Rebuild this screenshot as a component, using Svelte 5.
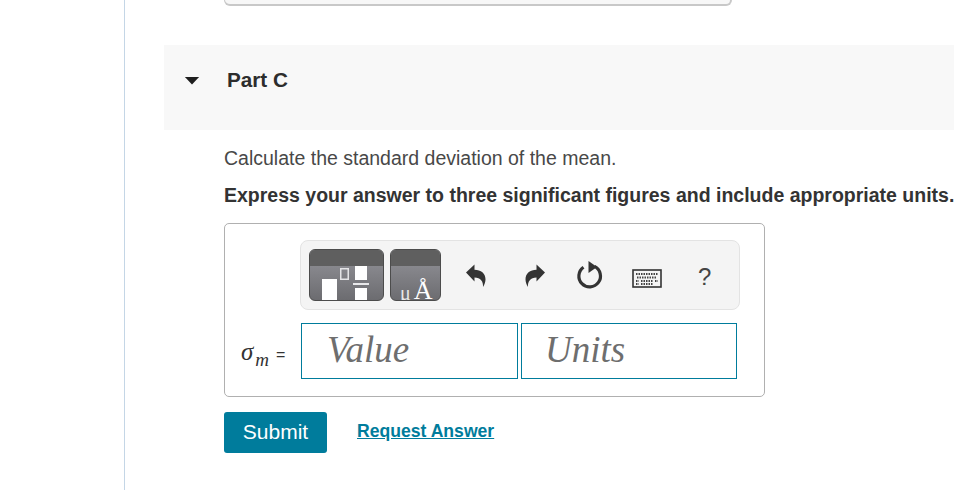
<script>
	const part = 'Part C';
</script>

<div class="page">
	<div class="prev-card"></div>

	<section class="part">
		<header class="part-head">
			<svg class="caret" width="18" height="10" viewBox="0 0 18 10"><path d="M1 1h16l-8 8.500z" fill="#1f1f1f" /></svg>
			<h2>{part}</h2>
		</header>

		<div class="part-body">
			<p class="prompt">Calculate the standard deviation of the mean.</p>
			<p class="instr">Express your answer to three significant figures and include appropriate units.</p>

			<div class="answer">
				<div class="toolbar">
					<div class="tpl wide">
						<div class="tpl-top"></div>
						<svg width="73" height="36" viewBox="0 0 73 36">
							<rect x="12" y="15" width="15" height="21" fill="#fff" />
							<rect x="30.750" y="4.750" width="7.500" height="10.500" fill="none" stroke="#e4e4e6" stroke-width="1.500" />
							<rect x="45" y="1" width="12" height="15" fill="#fff" />
							<rect x="43" y="19" width="16" height="2" fill="#e8e8ea" />
							<rect x="45" y="24" width="12" height="12" fill="#fff" />
						</svg>
					</div>
					<div class="tpl narrow">
						<div class="tpl-top"></div>
						<span class="mu">μ</span><span class="ang">Å</span>
					</div>

					<div class="tools">
						<svg class="undo" width="22" height="24" viewBox="0 0 22 24"><path d="M1 9.500 9.500 1.500v5.300c6.500 0 11 3.700 11 9.500 0 2.800-1 5.500-2.500 7.700.5-5.500-2.500-9.500-8.500-9.500v4z" fill="#333" /></svg>
						<svg class="redo" width="22" height="24" viewBox="0 0 22 24"><path d="M21 9.500 12.500 1.500v5.300c-6.500 0-11 3.700-11 9.500 0 2.800 1 5.500 2.500 7.700-.5-5.500 2.500-9.500 8.500-9.500v4z" fill="#333" /></svg>
						<svg class="reset" width="28" height="30" viewBox="0 0 28 30">
							<path d="M18.500 6.400A10.800 10.800 0 1 1 7.500 7.200" fill="none" stroke="#333" stroke-width="3.200" />
							<path d="M12.500 1l8.500 6-8.500 6z" fill="#333" />
						</svg>
						<svg class="keys" width="30" height="19" viewBox="0 0 30 19">
							<rect x="1" y="1" width="28" height="17" fill="#f4f4f4" stroke="#333" stroke-width="1.600" />
							<path d="M4 5h22M5 8.500h20M4 12h3M9 12h12M23 12h3M4 15h3M9 15h12" stroke="#444" stroke-width="1.800" stroke-dasharray="1.500 1" fill="none" />
						</svg>
						<span class="help">?</span>
					</div>
				</div>

				<div class="row">
					<span class="label"><i>σ<sub>m</sub></i><span class="eq">=</span></span>
					<div class="field value">Value</div>
					<div class="field units">Units</div>
				</div>
			</div>

			<div class="actions">
				<button>Submit</button>
				<a href="#answer">Request Answer</a>
			</div>
		</div>
	</section>
</div>

<style>
	:global(body) {
		margin: 0;
		background: #fff;
	}

	.page {
		box-sizing: border-box;
		height: 490px;
		margin-left: 124px;
		width: 830px;
		border-left: 1px solid #c4d6e6;
		overflow: hidden;
		font-family: "Liberation Sans", Arial, sans-serif;
		color: #333;
	}

	.prev-card {
		box-sizing: border-box;
		width: 508px;
		height: 6px;
		margin-left: 99px;
		background: #f7f7f7;
		border: 1px solid #c8c8c8;
		border-top: 0;
		border-right-width: 2px;
		border-bottom-width: 2px;
		border-radius: 0 0 8px 8px;
	}

	.part {
		margin: 39px 0 0 39px;
	}

	.part-head {
		box-sizing: border-box;
		height: 85px;
		background: #f8f8f8;
		display: flex;
		align-items: center;
		padding: 0 0 15px 20px;
	}

	.caret {
		flex: none;
		width: 16px;
		height: 9px;
	}

	h2 {
		margin: 0 0 0 27px;
		font-size: 20.700px;
		font-weight: bold;
		color: #2d2d2d;
	}

	.part-body {
		padding: 16px 0 0 60px;
	}

	p {
		margin: 0;
		font-size: 19.500px;
		line-height: 24px;
		white-space: nowrap;
	}

	.prompt {
		color: #484848;
	}

	.instr {
		margin-top: 13px;
		font-weight: bold;
	}

	.answer {
		box-sizing: border-box;
		width: 541px;
		height: 174px;
		margin-top: 16px;
		border: 1px solid #b0b0b0;
		border-radius: 5px;
		padding: 16px 24px 0 75px;
	}

	.toolbar {
		box-sizing: border-box;
		width: 440px;
		height: 70px;
		background: #f4f4f4;
		border: 1px solid #e3e3e3;
		border-radius: 8px;
		display: flex;
		align-items: center;
		padding: 0 0 0 8px;
		gap: 6px;
	}

	.tpl {
		position: relative;
		box-sizing: border-box;
		height: 52px;
		background: linear-gradient(#95959b, #6c6c70);
		border: 1px solid #4c4c4c;
		border-radius: 6px;
		overflow: hidden;
		display: flex;
		align-items: flex-end;
		flex: none;
	}

	.wide {
		width: 75px;
	}

	.narrow {
		width: 51px;
		font-family: "Liberation Serif", serif;
		color: #fff;
	}

	.tpl-top {
		position: absolute;
		top: 0;
		left: 0;
		right: 0;
		height: 16px;
		background: #5f5f5f;
	}

	.tpl svg {
		display: block;
	}

	.mu {
		font-size: 20px;
		line-height: 20px;
		margin: 0 0 -3px 9px;
		color: #e8e8e8;
	}

	.ang {
		font-size: 26px;
		line-height: 21px;
		margin: 0 0 -1px 3px;
	}

	.tools {
		display: flex;
		align-items: center;
		margin-left: 18px;
	}

	.tools svg {
		display: block;
		flex: none;
	}

	.redo {
		margin-left: 37px;
	}

	.reset {
		margin-left: 30px;
	}

	.keys {
		margin-left: 28px;
		margin-top: 6px;
	}

	.help {
		margin: 4px 0 0 36px;
		font-size: 24px;
		color: #444;
	}

	.row {
		display: flex;
		align-items: center;
		margin: 13px 0 0 -59px;
	}

	.label {
		box-sizing: border-box;
		width: 60px;
		margin-right: 1px;
		padding: 2px 0 0 1px;
		margin-left: -1px;
		font-family: "Liberation Serif", serif;
		font-size: 25px;
		color: #333;
		white-space: nowrap;
		display: flex;
		align-items: baseline;
	}

	.label sub {
		font-size: 19px;
		line-height: 0;
		margin-left: 2px;
	}

	.eq {
		font-family: "Liberation Sans", sans-serif;
		font-size: 16px;
		margin-left: 7px;
	}

	.field {
		box-sizing: border-box;
		height: 56px;
		border: 1px solid #007c9c;
		background: #fff;
		font-family: "Liberation Serif", serif;
		font-style: italic;
		font-size: 37px;
		line-height: 52px;
		color: #6e6e6e;
		padding-left: 25px;
	}

	.value {
		width: 217px;
	}

	.units {
		width: 216px;
		margin-left: 3px;
		padding-left: 23px;
	}

	.actions {
		display: flex;
		align-items: center;
		margin-top: 15px;
	}

	button {
		box-sizing: border-box;
		width: 103px;
		height: 41px;
		border: 0;
		border-radius: 3px;
		background: #007c9c;
		color: #fff;
		font-family: inherit;
		font-size: 21px;
		padding: 0 0 2px;
	}

	a {
		margin: -3px 0 0 30px;
		font-size: 17.600px;
		font-weight: bold;
		color: #007c9c;
		text-decoration: underline;
	}
</style>
